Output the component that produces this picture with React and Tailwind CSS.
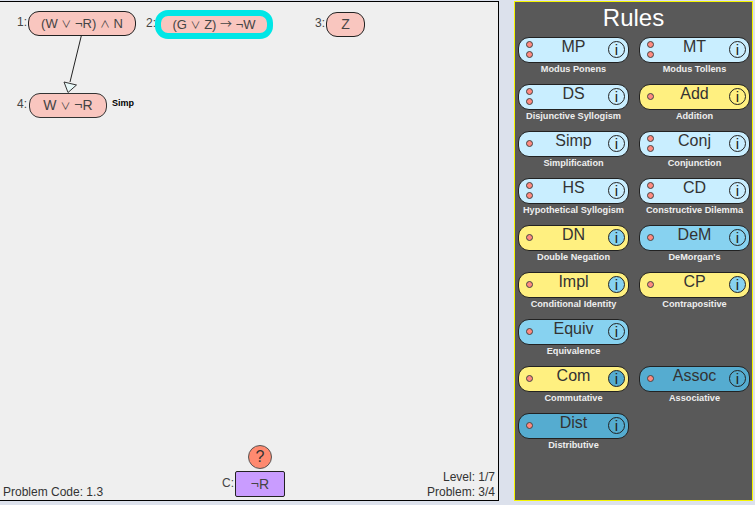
const rules = [
  { code: 'MP', name: 'Modus Ponens', tone: 'light', dots: 2, info: 'light' },
  { code: 'MT', name: 'Modus Tollens', tone: 'light', dots: 2, info: 'light' },
  { code: 'DS', name: 'Disjunctive Syllogism', tone: 'light', dots: 2, info: 'light' },
  { code: 'Add', name: 'Addition', tone: 'yellow', dots: 1, info: 'yellow' },
  { code: 'Simp', name: 'Simplification', tone: 'light', dots: 1, info: 'light' },
  { code: 'Conj', name: 'Conjunction', tone: 'light', dots: 2, info: 'light' },
  { code: 'HS', name: 'Hypothetical Syllogism', tone: 'light', dots: 2, info: 'light' },
  { code: 'CD', name: 'Constructive Dilemma', tone: 'light', dots: 2, info: 'light' },
  { code: 'DN', name: 'Double Negation', tone: 'yellow', dots: 1, info: 'mid' },
  { code: 'DeM', name: "DeMorgan's", tone: 'mid', dots: 1, info: 'mid' },
  { code: 'Impl', name: 'Conditional Identity', tone: 'yellow', dots: 1, info: 'mid' },
  { code: 'CP', name: 'Contrapositive', tone: 'yellow', dots: 1, info: 'mid' },
  { code: 'Equiv', name: 'Equivalence', tone: 'mid', dots: 1, info: 'mid' },
  null,
  { code: 'Com', name: 'Commutative', tone: 'yellow', dots: 1, info: 'dark' },
  { code: 'Assoc', name: 'Associative', tone: 'dark', dots: 1, info: 'dark' },
  { code: 'Dist', name: 'Distributive', tone: 'dark', dots: 1, info: 'dark' },
];

const tones = {
  light: 'bg-[#c9eeff]',
  yellow: 'bg-[#fff080]',
  mid: 'bg-[#87d2f0]',
  dark: 'bg-[#55acd0]',
};

const Dot = () => (
  <span className="block h-[7px] w-[7px] rounded-full border border-[#444] bg-[#ff8a80]" />
);

const RuleCard = ({ rule }) => (
  <div className="flex h-[47px] w-[111px] flex-col items-center">
    <div className={`relative h-[25.5px] w-[111px] rounded-[11px] border border-[#222] ${tones[rule.tone]}`}>
      <div className="absolute left-[7px] top-0 flex h-full flex-col justify-center gap-[3px]">
        {Array.from({ length: rule.dots }).map((_, i) => (
          <Dot key={i} />
        ))}
      </div>
      <div className="text-center text-base leading-[18px] text-[#333]">{rule.code}</div>
      <div className={`absolute left-[89px] top-[3px] flex h-[17px] w-[17px] items-center justify-center rounded-full border border-[#222] text-[15px] leading-none text-[#222] ${tones[rule.info]}`}>
        i
      </div>
    </div>
    <div className="mt-[0.5px] whitespace-nowrap text-[9.2px] font-bold leading-[13px] text-[#eee]">{rule.name}</div>
  </div>
);

// connectives come from the CJK face, which draws them thin like the original
const Op = ({ children }) => <span className="font-['Noto_Sans_CJK_SC'] text-[10px]">{children}</span>;
const Arrow = () => <span className="font-['Noto_Sans_CJK_SC'] text-xs">→</span>;

const Node = ({ label, text, className, labelClass }) => (
  <>
    <span className={`absolute text-xs leading-none text-[#444] ${labelClass}`}>{label}</span>
    <div className={`absolute flex items-center justify-center whitespace-nowrap bg-[#f9c6bf] pb-px leading-none text-[#444] ${className}`}>
      {text}
    </div>
  </>
);

export default function App() {
  return (
    <div className="flex h-[505px] w-[755px] overflow-hidden bg-[#dce1ec] pt-px font-['Liberation_Sans',Arial,sans-serif]">
      {/* proof canvas */}
      <div className="relative flex h-[500px] w-[499px] shrink-0 flex-col justify-end border-y border-r border-black bg-[#efefef]">
        <svg className="absolute left-0 top-0 h-full w-full" viewBox="0 0 498 498">
          <line x1="81.5" y1="33" x2="70" y2="80" stroke="#222" strokeWidth="1" />
          <polygon points="64,80 76.5,83 68,90.5" fill="#e8f8f8" stroke="#333" strokeWidth="1" />
        </svg>

        <Node
          label="1:"
          labelClass="left-[17px] top-[14px]"
          text={<span>(W <Op>∨</Op> ¬R) <Op>∧</Op> N</span>}
          className="left-[28px] top-[9px] h-[25px] w-[108px] rounded-[11px] border border-[#222] text-[13px]"
        />
        <Node
          label="2:"
          labelClass="left-[146px] top-[15px]"
          text={<span>(G <Op>∨</Op> Z) <Arrow /> ¬W</span>}
          className="left-[155px] top-[8px] h-[29px] w-[118px] rounded-[13px] border-[6px] border-[#00e6e6] text-[13px]"
        />
        <Node label="3:" labelClass="left-[315px] top-[15px]" text="Z" className="left-[326px] top-[10px] h-[25px] w-[39px] rounded-[11px] border border-[#222] text-sm" />
        <Node
          label="4:"
          labelClass="left-[17px] top-[96px]"
          text={<span>W <Op>∨</Op> ¬R</span>}
          className="left-[29px] top-[91px] h-[25px] w-[78px] rounded-[11px] border border-[#333] text-sm"
        />
        <span className="absolute left-[112px] top-[95px] text-[9px] font-bold leading-[12px] text-black">Simp</span>

        <div className="absolute left-[248px] top-[443px] flex h-[24px] w-[24px] items-center justify-center rounded-full border border-[#555] bg-[#ff8a70] text-base leading-none text-[#333]">
          ?
        </div>
        <span className="absolute left-[222px] top-[475px] text-xs leading-none text-[#444]">C:</span>
        <div className="absolute left-[235px] top-[469px] flex h-[26px] w-[50px] items-center justify-center rounded-[2px] border border-[#222] bg-[#c99cff] text-sm leading-none text-[#444]">
          ¬R
        </div>

        <div className="flex items-end justify-between pl-[3px] pr-[3px] text-xs leading-[15px] text-[#333]">
          <span>Problem Code: 1.3</span>
          <div className="text-right">
            <div>Level: 1/7</div>
            <div>Problem: 3/4</div>
          </div>
        </div>
      </div>

      {/* rules panel */}
      <div className="ml-[15px] h-[500px] w-[239px] shrink-0 border border-[#f5f500] bg-[#595959] px-[3px]">
        <h1 className="h-[35px] text-center text-2xl font-normal leading-[31px] text-white">Rules</h1>
        <div className="grid grid-cols-[111px_111px] gap-x-[10px]">
          {rules.map((rule, i) => (rule ? <RuleCard key={rule.code} rule={rule} /> : <div key={i} />))}
        </div>
      </div>
    </div>
  );
}
